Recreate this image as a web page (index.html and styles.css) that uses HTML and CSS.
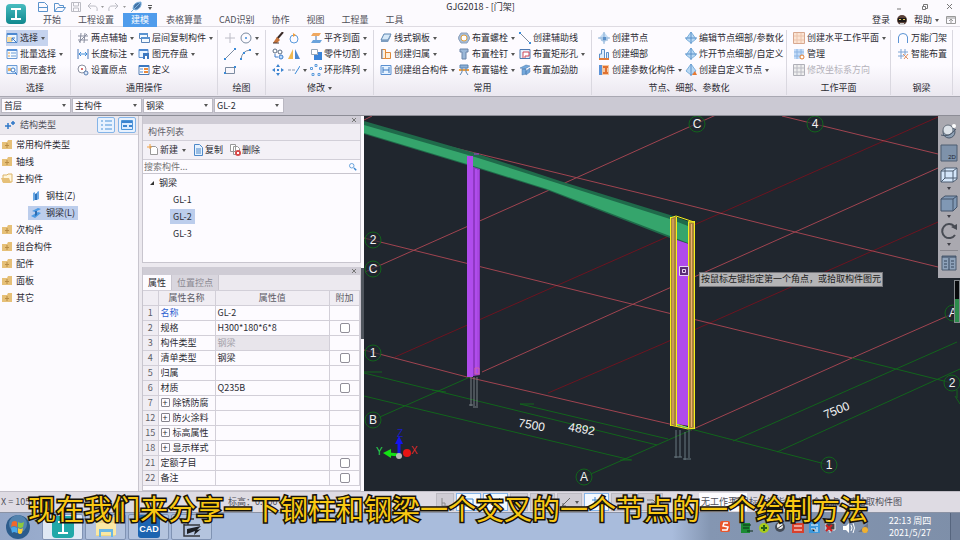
FILE: index.html
```html
<!DOCTYPE html>
<html lang="zh-CN">
<head>
    <meta charset="utf-8">
    <title>GJG2018 - [门架]</title>
    <meta name="viewport" content="width=device-width, initial-scale=1.0">
    <link rel="stylesheet" href="styles.css">
</head>
<body>
    <!-- Icon set -->
    <svg class="sprite" aria-hidden="true">
        <symbol id="i-select" viewBox="0 0 12 12"><path d="M1 1.500h10v9H1z" fill="#eef6ff" stroke="#5b8fd0"/><path d="M1 1h10v2H1z" fill="#4d88d0"/><path d="M1 5h5v5H1z" fill="#f8dba0"/><path d="M6 6l5 5M6 6v3M6 6h3" stroke="#3c7bc8" fill="none"/></symbol>
        <symbol id="i-batch" viewBox="0 0 12 12"><path d="M1 1.500h10v9H1z" fill="#f4faff" stroke="#6b9bd6"/><path d="M1 1h10v2H1z" fill="#5b93d8"/><path d="M2 5h2M2 8h2" stroke="#eba04b"/><path d="M5 5h5M5 8h5" stroke="#6b9bd6"/></symbol>
        <symbol id="i-find" viewBox="0 0 12 12"><path d="M1 1.500h10v8H1z" fill="#e6f2ff" stroke="#6b9bd6"/><path d="M2 4h3v3H2z" fill="#f0b060"/><circle cx="7" cy="6" r="2" fill="#fff" stroke="#3c7bc8"/><path d="M9 8l2 3" stroke="#3c7bc8"/></symbol>
        <symbol id="i-axis" viewBox="0 0 12 12"><path d="M4 1L3 11M8 1L7 11M1 4h10M1 8h10M2 10l8-8" stroke="#8b8fa0" fill="none"/></symbol>
        <symbol id="i-dim" viewBox="0 0 12 12"><path d="M1 1v10M11 1v10" stroke="#4a78b8"/><path d="M2 6h8M4 4L2 6l2 2M8 4l2 2-2 2" stroke="#3c8bd8" fill="none"/></symbol>
        <symbol id="i-origin" viewBox="0 0 12 12"><circle cx="5" cy="5" r="4" fill="#fff" stroke="#8b8fa0"/><circle cx="5" cy="5" r="1" fill="#d04040"/><circle cx="9" cy="9" r="2" fill="#dce8f8" stroke="#5b7fb0"/></symbol>
        <symbol id="i-copyfloor" viewBox="0 0 12 12"><path d="M1.500 1.500h8v5h-8zM3.500 5.500h8v5h-8z" fill="#f4faff" stroke="#5b84b8"/><path d="M1 1h9v2H1zM3 5h9v2H3z" fill="#5b93d0"/></symbol>
        <symbol id="i-save" viewBox="0 0 12 12"><path d="M1 1.500h9v8H1z" fill="#eaf4ff" stroke="#5b8fd0"/><path d="M1 1h9v2H1z" fill="#4d88d0"/><path d="M5 5h6v6H5z" fill="#3c78c0"/><path d="M7 8h2v3H7z" fill="#fff"/></symbol>
        <symbol id="i-define" viewBox="0 0 12 12"><path d="M1 1.500h10v9H1z" fill="#fff" stroke="#4d78b0"/><path d="M1 1h10v2H1z" fill="#3c78c0"/><path d="M2 5h3M2 8h3" stroke="#4d88d0"/><path d="M6 4h4v2H6zM6 7h4v2H6z" fill="#ec8a3a"/></symbol>
        <symbol id="i-point" viewBox="0 0 12 12"><path d="M6 1v10M1 6h10" stroke="#bcbcc6"/></symbol>
        <symbol id="i-circle" viewBox="0 0 12 12"><circle cx="6" cy="6" r="5" fill="none" stroke="#7c8ba0"/><circle cx="6" cy="6" r="1" fill="#3c8bd8"/></symbol>
        <symbol id="i-line" viewBox="0 0 12 12"><path d="M1 11L11 1" stroke="#7c8ba0"/><path d="M0 10h2v2H0zM10 0h2v2h-2z" fill="#3c8bd8"/></symbol>
        <symbol id="i-arc" viewBox="0 0 12 12"><path d="M1 11Q2 3 10 2" fill="none" stroke="#7c8ba0"/><path d="M0 10h2v2H0zM9 1h2v2H9zM3 4h2v2H3z" fill="#3c8bd8"/></symbol>
        <symbol id="i-rect" viewBox="0 0 12 12"><path d="M1.500 3.500h9v6h-9z" fill="none" stroke="#7c8ba0"/><path d="M0 8h2v2H0zM10 2h2v2h-2z" fill="#3c8bd8"/></symbol>
        <symbol id="i-brush" viewBox="0 0 12 12"><path d="M11 0L5 7" stroke="#3a2a28" stroke-width="2"/><path d="M5 5l3 3-3 3H1z" fill="#c8743a"/><path d="M1 11h6" stroke="#4a3a38"/></symbol>
        <symbol id="i-rotate" viewBox="0 0 12 12"><circle cx="6" cy="7" r="4" fill="none" stroke="#5b9bdc"/><path d="M5 1l3 2-3 2z" fill="#f0a040"/></symbol>
        <symbol id="i-dup" viewBox="0 0 12 12"><circle cx="3" cy="3" r="2" fill="#fff" stroke="#5a6a80"/><circle cx="8" cy="4" r="2" fill="#fff" stroke="#5a6a80"/><circle cx="9" cy="9" r="2" fill="#bcdcff" stroke="#3c7bc8"/><path d="M3 6v3h3" fill="none" stroke="#3c7bc8"/></symbol>
        <symbol id="i-mirror" viewBox="0 0 12 12"><path d="M5 1v10H0z" fill="#f0b850"/><path d="M7 1v10h5z" fill="#4d88d0"/></symbol>
        <symbol id="i-move" viewBox="0 0 12 12"><path d="M6 0l2 3H4zM6 12l2-3H4zM0 6l3-2v4zM12 6L9 4v4z" fill="#3c84d0"/><path d="M5 5h2v2H5z" fill="#3c84d0"/></symbol>
        <symbol id="i-extend" viewBox="0 0 12 12"><path d="M0 6h7" stroke="#8b9bb0" stroke-dasharray="3 1"/><path d="M12 2L7 10" stroke="#3c8bd8"/></symbol>
        <symbol id="i-align" viewBox="0 0 12 12"><path d="M3 1h8L9 4H1z" fill="#f0a860"/><path d="M3 8h9l-2 3H1z" fill="#6ba3dc"/><path d="M6 4v4" stroke="#4d78b0"/></symbol>
        <symbol id="i-cut" viewBox="0 0 12 12"><path d="M1.500 1.500h6v5h-6z" fill="#fff" stroke="#9aa8b8"/><path d="M4 7h4V4h4v8H4z" fill="#3c84d8"/></symbol>
        <symbol id="i-ring" viewBox="0 0 12 12"><path d="M5 .500h2v2H5zM.500 3.500h2v2h-2zM9.500 3.500h2v2h-2zM2 9.500h2v2H2zM8 9.500h2v2H8z" fill="#fff" stroke="#5b9bdc"/></symbol>
        <symbol id="i-plate" viewBox="0 0 12 12"><path d="M4 2h7L8 8H1z" fill="#d6e8f8" stroke="#5b84b0"/><path d="M1 8v2h7l3-6V2L8 8z" fill="#7c9cc0"/></symbol>
        <symbol id="i-belong" viewBox="0 0 12 12"><path d="M1.500 1.500h4v9h-4zM5.500 4.500h5v6h-5z" fill="#fff0dc" stroke="#e08a3a"/><path d="M2 1v10" stroke="#4d88d0"/></symbol>
        <symbol id="i-group" viewBox="0 0 12 12"><path d="M1 1.500h10v9H1z" fill="#e6f2ff" stroke="#5b8fd0"/><path d="M3 3v6M9 3v6M3 6h6" stroke="#3c78c0"/></symbol>
        <symbol id="i-bolt" viewBox="0 0 12 12"><path d="M3 1h6l3 5-3 5H3L0 6z" fill="#a4bcd8" stroke="#8ca0bc"/><circle cx="6" cy="6" r="3" fill="#fff" stroke="#e0a040"/></symbol>
        <symbol id="i-pin" viewBox="0 0 12 12"><path d="M2 1h8v3H8v7H4V4H2z" fill="#9cb8d8" stroke="#6b84a8"/></symbol>
        <symbol id="i-anchor" viewBox="0 0 12 12"><path d="M2 1h8v3H2z" fill="#8cb0d8" stroke="#5b84b0"/><path d="M1 6h10" stroke="#f0a040" stroke-width="2"/><path d="M4 4v4l-2 3M8 4v4l2 3" fill="none" stroke="#5b84b0"/></symbol>
        <symbol id="i-aux" viewBox="0 0 12 12"><path d="M1 1l10 10" stroke="#7c8ba0"/><path d="M0 0h2v2H0zM10 10h2v2h-2z" fill="#3c8bd8"/></symbol>
        <symbol id="i-hole" viewBox="0 0 12 12"><path d="M1 1.500h10v9H1z" fill="#e6f0fc" stroke="#4d78b0"/><path d="M4 10V4h6v4H6v2" fill="#fff" stroke="#d04858"/></symbol>
        <symbol id="i-rib" viewBox="0 0 12 12"><path d="M1 4l6-3 4 1-5 3zM3 5v6l4-1V5zM7 7l4-3v4l-4 3z" fill="#74a8dc" stroke="#4474a8" stroke-width=".5"/></symbol>
        <symbol id="i-node" viewBox="0 0 12 12"><path d="M6 0l5 6-5 5-5-5z" fill="#c4dcf4"/><path d="M6 0v12M0 6h12M3 8h7" stroke="#8cb0d4"/><path d="M5 5h3v3H5z" fill="#5b8fc8"/></symbol>
        <symbol id="i-detail" viewBox="0 0 12 12"><path d="M1 11h10" stroke="#e07a3a" stroke-width="2"/><path d="M1.500 10V6h2V1.500h3V10M8.500 10V4.500h2V10" fill="#dcecfc" stroke="#5b8fc8"/></symbol>
        <symbol id="i-param" viewBox="0 0 12 12"><path d="M1 1h3v10H1z" fill="#5b93d8"/><path d="M4 1h7v10H4z" fill="#f6c8a0"/><path d="M5 3h5M5 9h5M8 3v6" stroke="#e07030" stroke-width="2"/></symbol>
        <symbol id="i-tetra" viewBox="0 0 12 12"><path d="M6 0l5 7-5 4-5-4z" fill="#b8d8f4" stroke="#7cb0dc"/><path d="M6 0v12M0 6h12" stroke="#5b90c8"/></symbol>
        <symbol id="i-custom" viewBox="0 0 12 12"><path d="M6 0l5 7-5 4-5-4z" fill="#b8d8f4" stroke="#7cb0dc"/><path d="M6 0v12" stroke="#5b90c8"/><path d="M7 11h5L10 7z" fill="#e87830"/></symbol>
        <symbol id="i-plane" viewBox="0 0 12 12"><path d="M.500.500h11v11H.500z" fill="#fbe4d4" stroke="#d8a890"/><path d="M4 1v10M8 1v10M1 4h10M1 8h10" stroke="#ecc4ac"/></symbol>
        <symbol id="i-manage" viewBox="0 0 12 12"><path d="M1 1h10v10H1z" fill="#c4dcf8"/><path d="M4 1v10M8 1v10M1 4h10M1 8h10" stroke="#8cb4e4"/><circle cx="9" cy="9" r="2" fill="#fff" stroke="#e88030"/></symbol>
        <symbol id="i-grid" viewBox="0 0 12 12"><path d="M.500.500h11v11H.500z" fill="#eee" stroke="#b0b0b8"/><path d="M4 1v10M8 1v10M1 4h10M1 8h10" stroke="#bcbcc4"/></symbol>
        <symbol id="i-frame" viewBox="0 0 12 12"><path d="M1.500 11V5Q2 1.500 6 1.500T10.500 5v6" fill="none" stroke="#5b93d4"/></symbol>
        <symbol id="i-smart" viewBox="0 0 12 12"><path d="M4 1v10M8 1v6M1 4h10M1 8h6" stroke="#7ca4d4"/><path d="M6 6l5 5M11 6l-4 5" stroke="#e09060"/></symbol>
        <symbol id="i-folder" viewBox="0 0 12 12"><path d="M1 3h5l1-2h4v9H1z" fill="#e6c078"/><path d="M6 4v5M4 6.500h4" stroke="#b88c44"/></symbol>
        <symbol id="i-folder-open" viewBox="0 0 12 12"><path d="M2 2h4l1-1h4v8H2z" fill="#fff6dc" stroke="#dcb468"/><path d="M0 5h8l2 5H2z" fill="#e6c078"/></symbol>
        <symbol id="i-column" viewBox="0 0 12 12"><path d="M3 3l2-1v8l-2 1zM7 2l2-1v8l-2 1z" fill="#6ba8e4"/><path d="M5 4l2-1v7H5z" fill="#2f74bc"/></symbol>
        <symbol id="i-beam" viewBox="0 0 12 12"><path d="M2 4l6-3 3 1-6 3zM1 9l7-4 3 1-6 5z" fill="#4c9ae4"/><path d="M5 4v5l2-1V4z" fill="#2f6cb0"/></symbol>
    </svg>

    <!-- Title and tabs -->
    <header class="top">
        <button class="logo" aria-label="应用菜单">
            <svg viewBox="0 0 20 20"><path d="M5 4h10v2h-4v8h4v2H5v-2h4V6H5z" fill="#fff"/></svg>
        </button>
        <div class="top-rows">
            <div class="title-row">
                <svg class="quick" viewBox="0 0 120 12">
                    <g fill="none" stroke="#5b93cc">
                        <path d="M2.500 1.500h6l3 3v6h-9zM2 6.500h9"/>
                        <path d="M18.500 10.500v-8h4l1 2h4v2M18.500 10.500l3-4h8l-3 4z"/>
                    </g>
                    <g fill="none" stroke="#bcbcc4">
                        <path d="M35.500 1.500h9v9h-9zM37.500 2v3h5V2M37.500 10V7h5v3"/>
                        <path d="M55 2l-3 3 3 3M52 5h6q4 0 3 5"/>
                        <path d="M79 2l3 3-3 3M82 5h-6q-4 0-3 5"/>
                    </g>
                    <path d="M65 5h3l-1.500 2zM87 5h3l-1.500 2z" fill="#999"/>
                    <path d="M97 8q0-7 8-7 1 6-5 8zM95 11l9-9" fill="#4474a8" stroke="#7cb0dc"/>
                    <path d="M112 6h4l-2 3zM112 4h4v1h-4z" fill="#555"/>
                </svg>
                <div class="title">GJG2018 - [门架]</div>
                <svg class="winbtns" viewBox="0 0 60 12"><g fill="none" stroke="#777"><path d="M2 8h4M27.500 5.500h3v3h-3zM28.500 5V3.500h4v4H31M52 3l5 5M57 3l-5 5"/></g></svg>
            </div>
            <nav class="tabs">
                <button>开始</button><button>工程设置</button><button class="active">建模</button><button>表格算量</button><button>CAD识别</button><button>协作</button><button>视图</button><button>工程量</button><button>工具</button>
                <div class="account">
                    <a href="#">登录</a>
                    <svg viewBox="0 0 12 12"><circle cx="6" cy="6" r="5" fill="#5a4038"/><path d="M2 4h8v4H2z" fill="#1c1818"/><path d="M3 5h2v1H3zM7 5h2v1H7z" fill="#e8d060"/><path d="M4 9h4v2H4z" fill="#ccc"/></svg>
                    <button class="drop">帮助</button>
                    <svg viewBox="0 0 12 12"><path d="M1.500 2.500h9v7h-9zM1 4h10M6 9V5M4 7l2-2 2 2" fill="none" stroke="#999"/></svg>
                </div>
            </nav>
        </div>
    </header>

    <!-- Ribbon -->
    <section class="ribbon">
        <div class="group g-select">
            <div class="tools">
                <button class="drop on"><svg><use href="#i-select"/></svg>选择</button>
                <button class="drop"><svg><use href="#i-batch"/></svg>批量选择</button>
                <button><svg><use href="#i-find"/></svg>图元查找</button>
            </div>
            <h2>选择</h2>
        </div>
        <div class="group g-common">
            <div class="tools">
                <button class="drop"><svg><use href="#i-axis"/></svg>两点辅轴</button>
                <button class="drop"><svg><use href="#i-dim"/></svg>长度标注</button>
                <button><svg><use href="#i-origin"/></svg>设置原点</button>
                <button class="drop"><svg><use href="#i-copyfloor"/></svg>层间复制构件</button>
                <button class="drop"><svg><use href="#i-save"/></svg>图元存盘</button>
                <button><svg><use href="#i-define"/></svg>定义</button>
            </div>
            <h2>通用操作</h2>
        </div>
        <div class="group g-draw">
            <div class="tools">
                <button aria-label="点"><svg><use href="#i-point"/></svg></button>
                <button aria-label="直线"><svg><use href="#i-line"/></svg></button>
                <button aria-label="矩形"><svg><use href="#i-rect"/></svg></button>
                <button class="drop" aria-label="圆"><svg><use href="#i-circle"/></svg></button>
                <button class="drop" aria-label="弧"><svg><use href="#i-arc"/></svg></button>
            </div>
            <h2>绘图</h2>
        </div>
        <div class="group g-modify">
            <div class="tools">
                <button aria-label="格式刷"><svg><use href="#i-brush"/></svg></button>
                <button aria-label="复制"><svg><use href="#i-dup"/></svg></button>
                <button aria-label="移动"><svg><use href="#i-move"/></svg></button>
                <button aria-label="旋转"><svg><use href="#i-rotate"/></svg></button>
                <button aria-label="镜像"><svg><use href="#i-mirror"/></svg></button>
                <button class="drop" aria-label="延伸"><svg><use href="#i-extend"/></svg></button>
                <button class="drop"><svg><use href="#i-align"/></svg>平齐到面</button>
                <button class="drop"><svg><use href="#i-cut"/></svg>零件切割</button>
                <button class="drop"><svg><use href="#i-ring"/></svg>环形阵列</button>
            </div>
            <h2 class="drop">修改</h2>
        </div>
        <div class="group g-often">
            <div class="tools">
                <button class="drop"><svg><use href="#i-plate"/></svg>线式钢板</button>
                <button class="drop"><svg><use href="#i-belong"/></svg>创建归属</button>
                <button class="drop"><svg><use href="#i-group"/></svg>创建组合构件</button>
                <button class="drop"><svg><use href="#i-bolt"/></svg>布置螺栓</button>
                <button class="drop"><svg><use href="#i-pin"/></svg>布置栓钉</button>
                <button class="drop"><svg><use href="#i-anchor"/></svg>布置锚栓</button>
                <button><svg><use href="#i-aux"/></svg>创建辅助线</button>
                <button class="drop"><svg><use href="#i-hole"/></svg>布置矩形孔</button>
                <button><svg><use href="#i-rib"/></svg>布置加劲肋</button>
            </div>
            <h2>常用</h2>
        </div>
        <div class="group g-node">
            <div class="tools">
                <button><svg><use href="#i-node"/></svg>创建节点</button>
                <button><svg><use href="#i-detail"/></svg>创建细部</button>
                <button class="drop"><svg><use href="#i-param"/></svg>创建参数化构件</button>
                <button><svg><use href="#i-tetra"/></svg>编辑节点细部/参数化</button>
                <button><svg><use href="#i-tetra"/></svg>炸开节点细部/自定义</button>
                <button class="drop"><svg><use href="#i-custom"/></svg>创建自定义节点</button>
            </div>
            <h2>节点、细部、参数化</h2>
        </div>
        <div class="group g-plane">
            <div class="tools">
                <button class="drop"><svg><use href="#i-plane"/></svg>创建水平工作平面</button>
                <button><svg><use href="#i-manage"/></svg>管理</button>
                <button disabled><svg><use href="#i-grid"/></svg>修改坐标系方向</button>
            </div>
            <h2>工作平面</h2>
        </div>
        <div class="group g-beam">
            <div class="tools">
                <button><svg><use href="#i-frame"/></svg>万能门架</button>
                <button><svg><use href="#i-smart"/></svg>智能布置</button>
            </div>
            <h2>钢梁</h2>
        </div>
    </section>

    <!-- Floor / component pickers -->
    <div class="pickers">
        <label><select aria-label="楼层"><option>首层</option></select></label>
        <label><select aria-label="类别"><option>主构件</option></select></label>
        <label><select aria-label="类型"><option>钢梁</option></select></label>
        <label><select aria-label="构件"><option>GL-2</option></select></label>
    </div>

    <main class="work">
        <!-- Structure types -->
        <aside class="types">
            <div class="types-head">
                <svg viewBox="0 0 12 12"><path d="M4 4v6M1 7h6M9 2v4M7 4h4" stroke="#2f78c8" stroke-width="1.500"/></svg>
                <span>结构类型</span>
                <button aria-label="列表"><svg viewBox="0 0 12 12"><path d="M1 2h2M1 6h2M1 10h2M5 2h7M5 6h7M5 10h7" stroke="#4d94d8"/></svg></button>
                <button aria-label="卡片"><svg viewBox="0 0 12 12"><path d="M.500 1.500h11v9H.500z" fill="#dcecff" stroke="#4d94d8"/><path d="M1 2h10v2H1zM2 6h4v2H2zM8 6h3v2H8z" fill="#3c84d0"/></svg></button>
            </div>
            <ul class="tree">
                <li><svg><use href="#i-folder"/></svg>常用构件类型</li>
                <li><svg><use href="#i-folder"/></svg>轴线</li>
                <li><svg><use href="#i-folder-open"/></svg>主构件</li>
                <li class="sub"><span><svg><use href="#i-column"/></svg>钢柱(Z)</span></li>
                <li class="sub"><span class="picked"><svg><use href="#i-beam"/></svg>钢梁(L)</span></li>
                <li><svg><use href="#i-folder"/></svg>次构件</li>
                <li><svg><use href="#i-folder"/></svg>组合构件</li>
                <li><svg><use href="#i-folder"/></svg>配件</li>
                <li><svg><use href="#i-folder"/></svg>面板</li>
                <li><svg><use href="#i-folder"/></svg>其它</li>
            </ul>
        </aside>

        <div class="docks">
            <!-- Component list -->
            <section class="dock list">
                <div class="grip"><button aria-label="关闭"><svg viewBox="0 0 6 6"><path d="M1 1l4 4M5 1L1 5" stroke="#777"/></svg></button></div>
                <h3>构件列表</h3>
                <div class="list-tools">
                    <button class="drop"><svg viewBox="0 0 12 12"><path d="M3.500 2.500h5l2 2v6h-7z" fill="#fff" stroke="#999"/><path d="M3 0v5M0 3h5" stroke="#f0a040"/></svg>新建</button>
                    <button><svg viewBox="0 0 12 12"><path d="M2.500.500h5l3 3v8h-8z" fill="#e6f2ff" stroke="#4d88c8"/><path d="M4 5h5M4 7h5M4 9h5" stroke="#4d88c8"/></svg>复制</button>
                    <button><svg viewBox="0 0 12 12"><path d="M1.500.500h5v7h-5zM4.500 2.500h4l2 2v6h-6z" fill="#fff" stroke="#999"/><circle cx="9" cy="9" r="3" fill="#d84848"/><path d="M8 8l2 2M10 8l-2 2" stroke="#fff"/></svg>删除</button>
                </div>
                <div class="search">
                    <input type="text" placeholder="搜索构件..." aria-label="搜索构件">
                    <svg viewBox="0 0 12 12"><circle cx="5" cy="5" r="3" fill="none" stroke="#3c88d0"/><path d="M8 8l3 3" stroke="#3c88d0" stroke-width="2"/></svg>
                </div>
                <ul class="components">
                    <li class="root"><svg viewBox="0 0 6 6"><path d="M5 1v4H1z" fill="#333"/></svg>钢梁</li>
                    <li>GL-1</li>
                    <li><span class="picked">GL-2</span></li>
                    <li>GL-3</li>
                </ul>
            </section>

            <!-- Properties -->
            <section class="dock props">
                <div class="grip"><button aria-label="关闭"><svg viewBox="0 0 6 6"><path d="M1 1l4 4M5 1L1 5" stroke="#777"/></svg></button></div>
                <div class="prop-tabs"><button class="active">属性</button><button>位置控点</button></div>
                <table>
                    <colgroup><col class="c-no"><col class="c-name"><col><col class="c-add"></colgroup>
                    <tr><th></th><th>属性名称</th><th>属性值</th><th>附加</th></tr>
                    <tr><th>1</th><td class="key">名称</td><td>GL-2</td><td></td></tr>
                    <tr><th>2</th><td>规格</td><td>H300*180*6*8</td><td><input type="checkbox" aria-label="规格 附加"></td></tr>
                    <tr><th>3</th><td>构件类型</td><td class="locked">钢梁</td><td></td></tr>
                    <tr><th>4</th><td>清单类型</td><td>钢梁</td><td><input type="checkbox" aria-label="清单类型 附加"></td></tr>
                    <tr><th>5</th><td>归属</td><td></td><td></td></tr>
                    <tr><th>6</th><td>材质</td><td>Q235B</td><td><input type="checkbox" aria-label="材质 附加"></td></tr>
                    <tr><th>7</th><td><button class="plus">+</button>除锈防腐</td><td></td><td></td></tr>
                    <tr><th>12</th><td><button class="plus">+</button>防火涂料</td><td></td><td></td></tr>
                    <tr><th>15</th><td><button class="plus">+</button>标高属性</td><td></td><td></td></tr>
                    <tr><th>18</th><td><button class="plus">+</button>显示样式</td><td></td><td></td></tr>
                    <tr><th>21</th><td>定额子目</td><td></td><td><input type="checkbox" aria-label="定额子目 附加"></td></tr>
                    <tr><th>22</th><td>备注</td><td></td><td><input type="checkbox" aria-label="备注 附加"></td></tr>
                </table>
            </section>
        </div>
        <div class="splitter"></div>

        <!-- 3D view -->
        <section class="view">
            <svg class="scene" viewBox="364 116 596 375" preserveAspectRatio="xMinYMin slice">
                <!-- grid axes -->
                <g stroke="#6c1420" fill="none">
                    <path d="M395 357L660 240 938 117M548 393L660 345 938 222"/>
                </g>
                <g stroke="#a04450" fill="none">
                    <path d="M364 120l8-4M365 272L547 191 660 140 716 115"/>
                    <path d="M430 142L660 198 795 232 938 267M364 238L660 311 852 358"/>
                    <path d="M364 350L467 377 691 429M482 372L620 310 795 232 938 168"/>
                    <path d="M691 430L852 358 952 314M782 116L938 154"/>
                </g>
                <!-- dimension lines -->
                <g stroke="#12641c" fill="none">
                    <path d="M373 420L470 377M584 477L691 430M691 429L829 465M852 358L952 383"/>
                    <path d="M364 373L437 391 657 445M364 396L631 460M520 404L668 439M364 372h18"/>
                    <path d="M733 441L957 342M777 452L960 369M520 404h14M620 460h12M432 390l14 2M957 390v8M955 396l5 8"/>
                </g>
                <!-- back column -->
                <path d="M467 157h6l7 4v214l-13 2z" fill="#9038c4"/>
                <path d="M467 157h6v220h-6zM475 169h2v205h-2z" fill="#b04cec"/>
                <path d="M478 170v204" stroke="#a848e0" stroke-width="2"/>
                <path d="M475 368h4v6h-4z" fill="none" stroke="#d060a0"/>
                <path d="M471 377v29M474 377v29M477 377v29M469 405h4M473 407h5" stroke="#777e84" fill="none"/>
                <!-- rafter -->
                <path d="M364 121L475 153 560 181 670 215 690 222V244L670 238 547 190 467 165 364 134z" fill="#1f6a4a"/>
                <path d="M364 125L475 157 560 184 670 219 688 226V243L670 236 547 189 467 164 364 133z" fill="#35a56c"/>
                <path d="M467 156h6v14h-6z" fill="#b04cec"/>
                <path d="M474 154h5" stroke="#a040d8"/>
                <!-- selected column -->
                <path d="M677 240l12 4v182l-12-2z" fill="#b04cec"/>
                <path d="M670 217h7v208h-7zM688 221h7v208h-7z" fill="#a8843c"/>
                <path d="M670.500 217v209M676.500 217v209M688.500 222v206M694.500 221v208M670 218l6-2 18 6-6 0M670 425l18 4 7-1M676 424l13 4" fill="none" stroke="#f4f01c"/>
                <path d="M673 219v205M691.500 224v203" stroke="#f0b070" fill="none"/>
                <path d="M677 425l11 3" stroke="#60e080"/>
                <path d="M676 430v28M680 430v27M685 432v28M689 430v28M674 457h8M683 459h8" stroke="#687880" fill="none"/>
                <path d="M679.500 266.500h9v9h-9zM682.500 269.500h3v3h-3z" fill="#5a2c78" stroke="#e8d8f4"/>
                <!-- axis bubbles -->
                <g fill="#20262e" fill-opacity=".6" stroke="#12641c">
                    <circle cx="697" cy="124" r="8"/><circle cx="815" cy="124" r="8"/><circle cx="373" cy="240" r="8"/><circle cx="373" cy="269" r="8"/>
                    <circle cx="373" cy="353" r="8"/><circle cx="373" cy="420" r="8"/><circle cx="584" cy="477" r="8"/><circle cx="829" cy="465" r="8"/>
                    <circle cx="952" cy="383" r="8"/><circle cx="953" cy="313" r="8"/>
                </g>
                <g class="marks">
                    <text x="697" y="128">C</text><text x="815" y="128">4</text><text x="373" y="244">2</text><text x="373" y="273">C</text>
                    <text x="373" y="357">1</text><text x="373" y="424">B</text><text x="584" y="481">A</text><text x="829" y="469">1</text>
                    <text x="952" y="387">2</text><text x="953" y="317">A</text>
                </g>
                <g class="dims">
                    <text transform="translate(531 429) rotate(10)">7500</text>
                    <text transform="translate(581 433) rotate(10)">4892</text>
                    <text transform="translate(838 414) rotate(-22)">7500</text>
                </g>
                <!-- axis gizmo -->
                <path d="M399 456V441" stroke="#1414f0" stroke-width="3"/><path d="M395 444l4-8 4 8z" fill="#1414f0"/>
                <path d="M399 455l-10-1" stroke="#14e014" stroke-width="3"/><path d="M391 449v9l-8-5z" fill="#14e014"/>
                <circle cx="407" cy="453" r="4" fill="#e81414"/><circle cx="399" cy="456" r="3" fill="#b8b8b8"/>
                <g class="gizmo"><text x="376" y="455" fill="#28d850">Y</text><text x="411" y="454" fill="#e02828">X</text><text x="397" y="437" fill="#1c1cc0">Z</text></g>
            </svg>
            <div class="hint">按鼠标左键指定第一个角点，或拾取构件图元</div>
            <div class="meter"></div>
            <div class="view-tools">
                <button aria-label="动态观察"><svg viewBox="0 0 18 18"><circle cx="9" cy="10" r="6" fill="#8ea0b4" stroke="#4c5a6c"/><circle cx="8" cy="8" r="5" fill="#dce2e8" stroke="#66707c"/><circle cx="14" cy="4" r="2" fill="#fff"/><path d="M1 13q8 3 15-6" stroke="#4c5a6c" fill="none"/></svg></button>
                <button aria-label="二维"><svg viewBox="0 0 18 18"><path d="M1 1h16v16H1z" fill="#7e92aa" stroke="#4c5c70"/><text x="12" y="15" class="tiny">2D</text></svg></button>
                <button class="more" aria-label="轴测"><svg viewBox="0 0 18 18"><path d="M1 5l4-3h12v11l-4 3H1z" fill="#d4e6fa" stroke="#4c5c70"/><path d="M1 5h12v11M13 5l4-3M5 2v10h12M5 12l-4 4" fill="none" stroke="#4c5c70"/></svg></button>
                <button class="more" aria-label="实体"><svg viewBox="0 0 18 18"><path d="M1 5l4-3h12v11l-4 4H1z" fill="#8098b4" stroke="#44546a"/><path d="M1 5h12v12M13 5l4-3" fill="none" stroke="#44546a"/></svg></button>
                <button class="more" aria-label="旋转"><svg viewBox="0 0 18 18"><path d="M14 4a7 7 0 1 0 1 9" fill="none" stroke="#484c54" stroke-width="2"/><path d="M11 5l6-3v6z" fill="#484c54"/></svg></button>
                <button class="last" aria-label="显示设置"><svg viewBox="0 0 18 18"><path d="M2 2h14v14H2z" fill="#8ea2ba" stroke="#4c5c70"/><path d="M2 3h14M4 7h3M11 7h3M4 10h3M11 10h3M4 13h3M11 13h3M9 4v12" stroke="#34445a" fill="none"/></svg></button>
            </div>
        </section>
    </main>

    <!-- Status bar -->
    <footer class="status">
        <span class="coords">X = 105</span>
        <span class="levels">标高：0.000</span>
        <div class="toggles">
            <button class="slim" aria-label="正交"><svg viewBox="0 0 12 12"><path d="M3 2v8h6M3 7h3v3" fill="none" stroke="#888"/></svg></button>
            <button class="on" aria-label="端点"><svg viewBox="0 0 12 12"><path d="M2 3h8v7H2z" fill="none" stroke="#3c84d0"/></svg></button>
            <button class="on" aria-label="交点"><svg viewBox="0 0 12 12"><path d="M2 2l8 8M10 2l-8 8" stroke="#3c84d0"/></svg></button>
            <button class="slim" aria-label="中点"><svg viewBox="0 0 12 12"><path d="M6 3l4 7H2z" fill="none" stroke="#888"/></svg></button>
            <button aria-label="垂点"><svg viewBox="0 0 12 12"><path d="M6 2v8M2 10h8" stroke="#888"/></svg></button>
            <button class="drop" aria-label="最近点"><svg viewBox="0 0 12 12"><path d="M2 10l8-8M3 7v3h3" fill="none" stroke="#666"/></svg></button>
            <button class="on" aria-label="偏移"><svg viewBox="0 0 12 12"><path d="M4 1v6M1 4h6M10 6v4M8 8h4" stroke="#3c84d0"/></svg></button>
            <button aria-label="极轴"><svg viewBox="0 0 12 12"><path d="M2 2h8M3 5h6M2 9h8" stroke="#777"/></svg></button>
            <button aria-label="拾取"><svg viewBox="0 0 12 12"><path d="M2 4h6l3 3H6" fill="none" stroke="#777"/></svg></button>
        </div>
        <label class="plane"><select aria-label="工作平面"><option>无工作平面</option></select></label>
        <span class="prompt">按鼠标左键指定第一个角点，或拾取构件图</span>
    </footer>

    <!-- Windows taskbar -->
    <div class="taskbar">
        <button class="start" aria-label="开始"><svg viewBox="0 0 26 26"><circle cx="13" cy="13" r="12" fill="#2c5c8c"/><circle cx="13" cy="10" r="9" fill="#6c9cc4" fill-opacity=".6"/><path d="M7 8q3-2 5 0v5q-3-2-6 0z" fill="#f0682c"/><path d="M13 8q3 2 6 0l-1 5q-3 2-5 0z" fill="#8cc83c"/><path d="M6 14q3-2 6 0v5q-3-2-5 0z" fill="#48a8ec"/><path d="M13 14q3 2 5 0l-1 5q-2 2-4 0z" fill="#fccc34"/></svg></button>
        <button class="task front" aria-label="GJG2018"><svg viewBox="0 0 24 24"><rect x="1" y="1" width="22" height="22" rx="4" fill="#20a8a8"/><path d="M7 6h10v2h-4v9h4v2H7v-2h4V8H7z" fill="#fff"/></svg></button>
        <button class="task" aria-label="资源管理器"><svg viewBox="0 0 24 24"><path d="M2 4h7l2-2h10v19H2z" fill="#f0d884"/><path d="M2 8h20v12H2z" fill="#fae8a4"/><path d="M6 22v-7h12v7M6 16h12" fill="none" stroke="#6cb8e4" stroke-width="2"/></svg></button>
        <button class="task" aria-label="CAD"><svg viewBox="0 0 24 24"><rect x="1" y="0" width="22" height="23" rx="3" fill="#1c64b0"/><text x="12" y="17" class="cad">CAD</text></svg></button>
        <button class="task" aria-label="工具"><svg viewBox="0 0 24 24"><path d="M4 9v12h16M4 10h16M8 4v6M8 4h6" fill="none" stroke="#33363c" stroke-width="1.500"/><path d="M7 14l14-3-4 4 4-1-7 6 1-4-8 3z" fill="#1c1f24"/></svg></button>
        <div class="tray">
            <svg viewBox="0 0 150 14">
                <rect x="1" y="1" width="10" height="11" rx="2" fill="#e8562c"/><path d="M9 3H5L4 6l5 1-1 3H3" fill="none" stroke="#fff" stroke-width="1.500"/>
                <path d="M22 3h9v10h-9z" fill="#1c8c34"/><path d="M24 5h8M24 8h6M28 11h6" stroke="#0c2c14"/>
                <circle cx="45" cy="8" r="5" fill="#a8cc1c"/><path d="M45 5v6M42 8h6" stroke="#276018" stroke-width="2"/>
                <circle cx="61" cy="7" r="5" fill="#444c58"/><circle cx="61" cy="6" r="3" fill="#eee"/><path d="M58 9l7-5" stroke="#444"/>
                <path d="M73 3h12v10H73z" fill="#d8402c"/><path d="M75 6h8M75 10h8" stroke="#fff"/>
                <path d="M90 2h11v11H90z" fill="#3c98dc"/><path d="M92 5h7M92 9h4v3M98 7v5" stroke="#fff"/>
                <path d="M107 3h9v7h-9zM111 10v3" fill="#444" stroke="#eee"/><path d="M107 5l6 6M113 5l-6 6" stroke="#d02020" stroke-width="2"/>
                <path d="M124 6h3l3-3v10l-3-3h-3z" fill="#fff"/><path d="M132 5q2 3 0 6M134 3q3 5 0 10" fill="none" stroke="#fff"/>
                <path d="M139 12l10-9v9z" fill="#6c7484"/><circle cx="146" cy="10" r="3" fill="#f0b030"/>
            </svg>
        </div>
        <div class="clock">22:13 周四<br>2021/5/27</div>
        <button class="desktop" aria-label="显示桌面"></button>
    </div>

    <div class="caption">现在我们来分享一下钢柱和钢梁一个交叉的一个节点的一个绘制方法</div>
</body>
</html>
```
FILE: styles.css
```css
* {
    box-sizing: border-box;
}

body {
    margin: 0;
    height: 100vh;
    display: flex;
    flex-direction: column;
    overflow: hidden;
    position: relative;
    background: #fcfafe;
    color: #2c2c34;
    font: 9px/12px "Noto Sans CJK SC", "Noto Sans", sans-serif;
}

button, input, select {
    font: inherit;
    color: inherit;
    margin: 0;
    padding: 0;
    border: 0;
    background: none;
}

button {
    display: flex;
    align-items: center;
    white-space: nowrap;
}

h2, h3, ul {
    margin: 0;
    padding: 0;
    font-size: 9px;
    font-weight: normal;
    list-style: none;
}

a {
    color: inherit;
    text-decoration: none;
}

svg {
    width: 12px;
    height: 12px;
    flex: none;
}

.sprite {
    display: none;
}

/* small arrow after drop-down items */
.drop::after {
    content: "";
    margin-left: 3px;
    border: 2px solid transparent;
    border-top: 3px solid #555;
    border-bottom: 0;
}

.picked {
    background: #bccdec;
}

/* Title and tabs */
.top {
    display: flex;
    height: 27px;
    flex: none;
    border-bottom: 1px solid #dedbe2;
}

.logo {
    width: 32px;
    padding: 4px 6px 2px;
}

.logo svg {
    width: 20px;
    height: 20px;
    border-radius: 4px;
    background: linear-gradient(#48bcc0, #10888e);
}

.top-rows {
    flex: 1;
}

.title-row {
    display: flex;
    height: 13px;
    justify-content: space-between;
    align-items: center;
}

.title-row .quick {
    width: 120px;
    margin-left: 4px;
}

.title {
    padding-right: 90px;
}

.title-row .winbtns {
    width: 60px;
    margin-right: 5px;
}

.tabs {
    display: flex;
    gap: 1px;
    padding-left: 3px;
    color: #50505a;
}

.tabs > button {
    height: 14px;
    padding: 0 8px;
}

.tabs .active {
    background: #4f9cec;
    color: #fff;
}

.account {
    display: flex;
    align-items: center;
    gap: 6px;
    margin-left: auto;
    padding-right: 3px;
    color: #2c2c34;
}

/* Ribbon */
.ribbon {
    display: flex;
    flex: none;
    height: 70px;
    padding: 3px 7px 1px 0;
    background: linear-gradient(#fdfbff 55%, #ebe8f0);
    border-bottom: 1px solid #a9a8b2;
}

.group {
    display: flex;
    flex-direction: column;
    justify-content: space-between;
    flex-grow: 1;
    padding-left: 6px;
    border-right: 1px solid #dad8e0;
}

.tools {
    display: grid;
    grid-auto-flow: column;
    grid-template-rows: repeat(3, 16px);
    justify-content: start;
}

.tools button {
    gap: 2px;
    justify-self: start;
}

.tools .drop::after {
    margin-left: 1px;
}

.tools .on {
    padding-right: 3px;
    background: #c5d3ee;
}

.tools button:disabled {
    color: #b4b2ba;
}

.group h2 {
    display: flex;
    align-items: center;
    justify-content: center;
    padding: 0 6px 1px 0;
}

.g-select { width: 71px; }
.g-common { width: 147px; }
.g-common .tools { grid-template-columns: 61px auto; }
.g-draw { width: 48px; }
.g-draw .tools { grid-template-columns: 16px auto; }
.g-modify { width: 108px; }
.g-modify .tools { grid-template-columns: 16px 22px auto; }
.g-often { width: 218px; }
.g-often .tools { grid-template-columns: 78px 61px auto; }
.g-node { width: 195px; }
.g-node .tools { grid-template-columns: 87px auto; }
.g-plane { width: 104px; }
.g-beam { width: 62px; }

/* Pickers */
.pickers {
    display: flex;
    flex: none;
    gap: 1px;
    height: 19px;
    padding: 1px 1px 2px;
    background: #cbc9d3;
    border-bottom: 1px solid #8d8d96;
}

.pickers label {
    display: flex;
    align-items: center;
    width: 70px;
    padding: 0 4px 0 2px;
    background: #fdfbff;
    border: 1px solid #bab8c2;
}

.pickers select {
    flex: 1;
    appearance: none;
}

.pickers label::after {
    content: "";
    border: 2px solid transparent;
    border-top: 3px solid #555;
    border-bottom: 0;
}

/* Work area */
.work {
    display: flex;
    flex: 1;
    min-height: 0;
}

.types {
    width: 139px;
    border-right: 1px solid #c8c5ce;
}

.types-head {
    display: flex;
    align-items: center;
    gap: 3px;
    height: 19px;
    padding: 0 2px 0 4px;
    background: #ece9ef;
    border-bottom: 1px solid #dad7de;
    color: #50505a;
}

.types-head span {
    flex: 1;
    padding-left: 1px;
}

.types-head button {
    padding: 1px 2px;
    background: #e8f2ff;
    border: 1px solid #84b4e8;
    border-radius: 2px;
}

.tree {
    padding-top: 1px;
}

.tree li {
    display: flex;
    align-items: center;
    gap: 3px;
    height: 17px;
    padding-left: 1px;
}

.tree .sub {
    padding-left: 28px;
}

.tree span {
    display: flex;
    align-items: center;
    gap: 4px;
    height: 14px;
    padding: 0 3px 0 2px;
}

.docks {
    display: flex;
    flex-direction: column;
    gap: 4px;
    width: 222px;
    padding-left: 3px;
    background: #ece9ef;
}

.dock {
    background: #fdfbff;
    border: 1px solid #c8c5ce;
    border-top: 0;
}

.grip {
    display: flex;
    justify-content: flex-end;
    height: 8px;
    padding-right: 3px;
    background: #cfccd5;
}

.grip svg {
    width: 6px;
    height: 6px;
}

.list {
    display: flex;
    flex-direction: column;
    height: 147px;
}

.list h3 {
    padding: 2px 5px;
    background: #f0edf3;
    border-bottom: 1px solid #d2cfd8;
    color: #60606a;
}

.list-tools {
    display: flex;
    gap: 6px;
    height: 19px;
    padding-left: 4px;
    background: #f4f1f7;
    border-bottom: 1px solid #d2cfd8;
}

.list-tools button {
    gap: 1px;
}

.search {
    display: flex;
    align-items: center;
    height: 14px;
    padding: 0 3px 0 1px;
    border-bottom: 1px solid #c8c5ce;
}

.search input {
    flex: 1;
    height: 12px;
    outline: none;
}

.search svg {
    width: 9px;
    height: 9px;
}

.components li {
    padding-left: 30px;
    line-height: 17px;
}

.components .root {
    display: flex;
    align-items: center;
    gap: 4px;
    padding-left: 6px;
}

.components .root svg {
    width: 6px;
    height: 6px;
}

.components .picked {
    margin-left: -3px;
    padding: 1px 3px;
}

/* Properties */
.props {
    flex: 1;
}

.prop-tabs {
    display: flex;
    height: 15px;
    background: #ece9ef;
}

.prop-tabs button {
    padding: 0 5px;
    background: #d9d6de;
    border-right: 1px solid #c8c5ce;
    color: #8a8892;
}

.prop-tabs .active {
    background: #fdfbff;
    color: #2c2c34;
}

.props table {
    width: 100%;
    border-collapse: collapse;
    table-layout: fixed;
    border-top: 1px solid #d2cfd8;
}

.c-no { width: 15px; }
.c-name { width: 57px; }
.c-add { width: 30px; }

.props tr {
    height: 15px;
}

.props th,
.props td {
    padding: 0 2px;
    border: 1px solid #d2cfd8;
    font-weight: normal;
    white-space: nowrap;
}

.props th:first-child {
    padding: 0;
    border-left: 0;
}

.props th {
    background: #f0edf3;
    color: #5c5c66;
}

.props .key {
    color: #2c5fd0;
}

.props .locked {
    background: #e8e5eb;
    color: #a4a2aa;
}

.props td:last-child {
    text-align: center;
}

.props input {
    appearance: none;
    display: block;
    width: 10px;
    height: 10px;
    margin: 0 auto;
    border: 1px solid #908e98;
    border-radius: 2px;
    background: #fff;
}

.plus {
    display: inline-block;
    width: 9px;
    height: 9px;
    margin-right: 3px;
    border: 1px solid #85838d;
    border-radius: 1px;
    line-height: 7px;
    text-align: center;
}

.splitter {
    width: 3px;
    margin: 152px 0;
    background: #50565e;
}

/* 3D view */
.view {
    flex: 1;
    position: relative;
    overflow: hidden;
    background: #20262e;
}

.scene {
    display: block;
    width: 100%;
    height: 100%;
}

.marks,
.dims {
    font-family: "Liberation Sans", Arial, sans-serif;
    font-size: 12px;
    fill: #f2f2f2;
    text-anchor: middle;
}

.gizmo {
    font: 10px "Liberation Sans", sans-serif;
}

.hint {
    position: absolute;
    left: 335px;
    top: 156px;
    padding: 0 1px 1px;
    background: #b4b4b6;
    border: 1px solid #77777c;
    color: #1c1c20;
    white-space: nowrap;
}

.meter {
    position: absolute;
    right: 0;
    top: 164px;
    width: 6px;
    height: 43px;
    border: 1px solid #84888c;
    background: linear-gradient(#080a0c 45%, #2c8c4c 45%);
}

.view-tools {
    position: absolute;
    top: 0;
    right: 0;
    display: flex;
    flex-direction: column;
    align-items: center;
    gap: 4px;
    width: 22px;
    padding: 6px 2px;
    background: #aaa9b0;
}

.view-tools button {
    flex-direction: column;
}

.view-tools svg {
    width: 18px;
    height: 18px;
}

.view-tools .more::after {
    content: "";
    margin-top: 3px;
    border: 2px solid transparent;
    border-top: 3px solid #404048;
    border-bottom: 0;
}

.view-tools .last {
    padding-top: 3px;
    border-top: 1px solid #88878e;
}

.tiny {
    font: 6px "Liberation Sans", sans-serif;
    text-anchor: middle;
    fill: #1c2430;
}

/* Status bar */
.status {
    display: flex;
    flex: none;
    align-items: center;
    height: 22px;
    background: #dedbe3;
    border-top: 1px solid #c0bdc6;
    border-bottom: 1px solid #8a92a4;
    color: #50505a;
    white-space: nowrap;
}

.coords {
    width: 228px;
    padding-left: 1px;
}

.levels {
    width: 208px;
}

.toggles {
    display: flex;
    gap: 2px;
    flex: 1;
}

.toggles button {
    justify-content: center;
    width: 25px;
    height: 18px;
    background: #cfccd4;
    border: 1px solid #bcbac2;
}

.toggles .slim {
    width: 18px;
}

.toggles .on {
    background: #f4f9ff;
    border-color: #84b4e8;
}

.plane select {
    width: 48px;
    height: 18px;
    padding-left: 2px;
    appearance: none;
    background: #fdfbff;
}

.prompt {
    padding-right: 58px;
    margin-left: -16px;
}

/* Taskbar */
.taskbar {
    display: flex;
    flex: none;
    align-items: center;
    gap: 2px;
    height: 27px;
    background: linear-gradient(90deg, #94a7c8, #a9bcdc 20%, #a9bcdc 70%, #8496b2 74%, #7e8fa9);
}

.start {
    margin: 0 9px 0 5px;
}

.taskbar .start svg {
    width: 26px;
    height: 26px;
}

.task {
    justify-content: center;
    width: 41px;
    height: 26px;
    background: #b4c4de;
    border: 1px solid #8093b3;
    border-radius: 2px;
}

.task.front {
    background: #dfe8f4;
}

.task svg {
    width: 24px;
    height: 24px;
}

.cad {
    font: bold 9px "Liberation Sans", sans-serif;
    text-anchor: middle;
    fill: #fff;
}

.tray {
    display: flex;
    margin-left: auto;
}

.tray svg {
    width: 152px;
    height: 14px;
}

.clock {
    width: 76px;
    color: #fff;
    text-align: center;
}

.desktop {
    width: 10px;
    height: 27px;
    background: #71809a;
    border-left: 1px solid #56657e;
}

/* Caption over the recording */
.caption {
    position: absolute;
    left: 0;
    right: 64px;
    bottom: 12px;
    font-size: 28px;
    line-height: 40px;
    text-align: center;
    white-space: nowrap;
    color: #f9c812;
    -webkit-text-stroke: 3px #16120a;
    paint-order: stroke fill;
}
```
